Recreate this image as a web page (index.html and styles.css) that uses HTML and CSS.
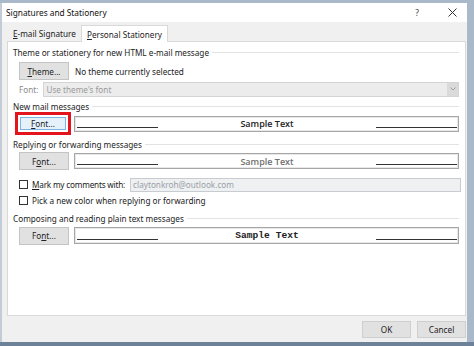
FILE: index.html
```html
<!DOCTYPE html>
<html>
<head>
<meta charset="utf-8">
<link rel="stylesheet" href="styles.css">
</head>
<body>
<div class="window">
  <div class="titlebar">
    <span class="title">Signatures and Stationery</span>
    <span class="help">?</span>
    <svg class="close" width="9" height="9" viewBox="0 0 9 9"><path d="M0.5 0.5 L8.5 8.5 M8.5 0.5 L0.5 8.5" stroke="#333" stroke-width="1" fill="none"/></svg>
  </div>
  <div class="tabs">
    <div class="tab"><u>E</u>-mail Signature</div>
    <div class="tab active"><u>P</u>ersonal Stationery</div>
  </div>
  <div class="panel">
    <div class="group">Theme or stationery for new HTML e-mail message</div>
    <div class="row theme-row">
      <button class="btn"><u>T</u>heme...</button>
      <span class="note">No theme currently selected</span>
    </div>
    <div class="row font-row">
      <span class="dim">Font:</span>
      <div class="combo"><span>Use theme's font</span><span class="arrow"><svg width="6" height="4" viewBox="0 0 6 4"><path d="M0.5 0.5 L3 3 L5.5 0.5" stroke="#a0a0a0" fill="none"/></svg></span></div>
    </div>

    <div class="group g2">New mail messages</div>
    <div class="row sample-row first">
      <div class="highlight"><button class="btn focus"><u>F</u>ont...</button></div>
      <div class="sample"><span class="ul-left"></span><span class="stext">Sample Text</span><span class="ul-right"></span></div>
    </div>

    <div class="group g3">Replying or forwarding messages</div>
    <div class="row sample-row second">
      <button class="btn tall">F<u>o</u>nt...</button>
      <div class="sample"><span class="ul-left"></span><span class="stext gray">Sample Text</span><span class="ul-right"></span></div>
    </div>
    <div class="row check-row c1">
      <span class="check"></span>
      <span class="label lbl-mark"><u>M</u>ark my comments with:</span>
      <div class="input">claytonkroh@outlook.com</div>
    </div>
    <div class="row check-row c2">
      <span class="check"></span>
      <span class="label">Pick a new color when replying or forwarding</span>
    </div>

    <div class="group g4">Composing and reading plain text messages</div>
    <div class="row sample-row third">
      <button class="btn tall">Fo<u>n</u>t...</button>
      <div class="sample"><span class="ul-left"></span><span class="stext mono">Sample Text</span><span class="ul-right"></span></div>
    </div>
  </div>
  <div class="footer">
    <button class="btn fbtn">OK</button>
    <button class="btn fbtn">Cancel</button>
  </div>
</div>
</body>
</html>
```
FILE: styles.css
```css
* { box-sizing: border-box; }
html, body { margin: 0; padding: 0; }
body {
  width: 474px;
  height: 346px;
  background: #a9b9c9;
  overflow: hidden;
  font-family: "Noto Sans", "Open Sans", sans-serif;
  font-size: 8.2px;
  color: #1a1a1a;
  box-shadow: inset 0 -4px 0 #6d8299;
}
u { text-decoration: underline; text-underline-offset: 1px; }
.window {
  margin: 3px 7px 0 2px;
  height: 339px;
  background: #f0f0f0;
  display: flex;
  flex-direction: column;
  box-shadow: -2px 0 0 #c3ccd6;
}
.titlebar {
  height: 19px;
  background: #fff;
  display: flex;
  align-items: center;
  padding-left: 4px;
}
.title { font-size: 8.3px; color: #111; flex: 1; }
.help { font-size: 8.5px; color: #444; margin-right: 29px; }
.close { margin-right: 10px; }
.tabs {
  height: 19px;
  display: flex;
  align-items: flex-end;
  padding-left: 6px;
}
.tab {
  height: 16px;
  padding: 0 5px;
  display: flex;
  align-items: center;
  color: #222;
  white-space: nowrap;
}
.tab.active {
  background: #fff;
  height: 17px;
  margin-bottom: -1px;
  border: 1px solid #d9d9d9;
  border-bottom: none;
  position: relative;
  z-index: 1;
}
.panel {
  flex: 1;
  background: #fff;
  border: 1px solid #d9d9d9;
  margin: 0 1px 0 5px;
  padding: 4px 6px 0 5px;
  display: flex;
  flex-direction: column;
}
.group {
  height: 12px;
  display: flex;
  align-items: center;
  gap: 3px;
  color: #222;
  white-space: nowrap;
}
.group::after {
  content: "";
  flex: 1;
  border-top: 1px solid #e3e3e3;
}
.row { display: flex; align-items: center; padding-left: 6px; white-space: nowrap; }
.btn {
  font-family: inherit;
  font-size: 8.2px;
  color: #222;
  background: #e1e1e1;
  border: 1px solid #c4c4c4;
  padding: 0;
  margin: 0;
  width: 50px;
  height: 18px;
  display: flex;
  align-items: center;
  justify-content: center;
}
.theme-row { margin-top: 4px; height: 18px; gap: 6px; }
.note { color: #222; }
.font-row { margin-top: 1px; height: 16px; gap: 5px; }
.dim { color: #8a8a8a; }
.combo {
  flex: 1;
  height: 15px;
  background: #ececec;
  border: 1px solid #d4d4d4;
  display: flex;
  align-items: center;
  justify-content: space-between;
  padding-left: 2px;
  color: #9a9a9a;
}
.arrow {
  width: 11px;
  height: 13px;
  background: #dadada;
  display: flex;
  align-items: center;
  justify-content: center;
}
.g2 { margin-top: 4px; height: 11px; }
.sample-row { gap: 5px; }
.first { height: 23px; }
.highlight {
  margin-left: -4px;
  margin-right: -2px;
  border: 3px solid #e3141b;
  padding: 2px;
  background: #fff;
}
.btn.focus {
  width: 46px;
  height: 13px;
  background: #e5f1fb;
  border: 1px solid #7fb2de;
}
.sample {
  flex: 1;
  height: 16px;
  border: 1px solid #a6a6a6;
  box-shadow: inset 0 0 0 1px #e8e8e8;
  display: flex;
  align-items: center;
  background: #fff;
}
.ul-left, .ul-right {
  width: 81px;
  border-top: 1px solid #333;
  align-self: flex-end;
  margin-bottom: 3px;
}
.ul-left { margin-left: 2px; }
.ul-right { margin-right: 1px; }
.stext {
  flex: 1;
  text-align: center;
  font-family: "Open Sans", "Noto Sans", sans-serif;
  font-weight: 600;
  font-size: 9px;
  color: #222;
}
.stext.gray { color: #707070; }
.stext.mono {
  font-family: "Liberation Mono", monospace;
  font-weight: bold;
  font-size: 9.6px;
  color: #222;
}
.g3 { margin-top: 3px; }
.second { margin-top: 2px; height: 18px; }
.tall { height: 18px; }
.check-row { gap: 4px; }
.check {
  width: 9px;
  height: 9px;
  border: 1px solid #333;
  background: #fff;
  flex: none;
}
.c1 { margin-top: 7px; height: 15px; }
.lbl-mark { flex: none; letter-spacing: -0.2px; margin-right: 1px; }
.input {
  flex: 1;
  height: 14px;
  background: #eef0f2;
  border: 1px solid #c7ccd2;
  color: #9aa0a6;
  display: flex;
  align-items: center;
  padding-left: 2px;
  margin-right: -2px;
}
.c2 { margin-top: 2px; height: 12px; }
.g4 { margin-top: 6px; }
.third { margin-top: 3px; height: 17px; }
.third .sample { height: 17px; }
.footer {
  height: 26px;
  display: flex;
  justify-content: flex-end;
  align-items: center;
  gap: 6px;
  padding-right: 1px;
}
.fbtn { width: 49px; height: 17px; border-color: #cfcfcf; }
```
